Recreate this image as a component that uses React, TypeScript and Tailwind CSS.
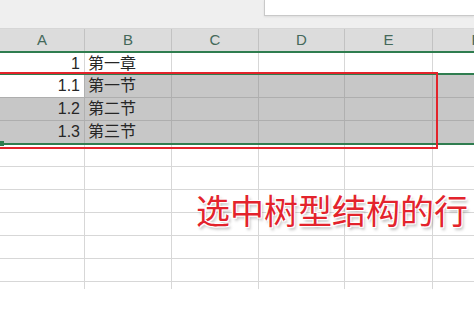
const cols = [
  { key: "A", w: "w-[85px]" },
  { key: "B", w: "w-[87px]" },
  { key: "C", w: "w-[87px]" },
  { key: "D", w: "w-[86px]" },
  { key: "E", w: "w-[88px]" },
  { key: "F", w: "w-[87px]" },
]

const rows = [
  { num: "1", title: "第一章", selected: false },
  { num: "1.1", title: "第一节", selected: true, active: true },
  { num: "1.2", title: "第二节", selected: true },
  { num: "1.3", title: "第三节", selected: true },
  { num: "", title: "", selected: false },
  { num: "", title: "", selected: false },
  { num: "", title: "", selected: false },
  { num: "", title: "", selected: false },
  { num: "", title: "", selected: false },
  { num: "", title: "", selected: false },
]

const cellFont = { fontFamily: '"Liberation Sans", "Noto Sans CJK SC", sans-serif' }

export default function App() {
  return (
    <div className="relative w-[474px] h-[315px] overflow-hidden bg-white" style={cellFont}>
      {/* formula bar strip */}
      <div className="flex h-[29px] bg-[#efefef] border-b border-[#d6d6d6]">
        <div className="w-[264px] shrink-0" />
        <div className="flex-1 h-[16px] bg-white border-l border-b border-[#c9c9c9] shadow-[0_1px_2px_rgba(0,0,0,0.08)]" />
      </div>

      {/* column headers */}
      <div className="flex h-[24px] bg-[#dcdcdc] border-b-2 border-[#2f7d4f]">
        {cols.map((c) => (
          <div
            key={c.key}
            className={`${c.w} shrink-0 border-r border-[#c2c2c2] flex items-center justify-center text-[15px] text-[#44695a]`}
          >
            {c.key}
          </div>
        ))}
      </div>

      {/* rows */}
      {rows.map((r, i) => (
        <div
          key={i}
          className={`flex ${i === 0 ? "h-[22px]" : "h-[23px]"} border-b ${
            r.selected ? "bg-[#c7c7c7] border-[#aeaeae]" : "bg-white border-[#d7d7d7]"
          }`}
        >
          {cols.map((c, j) => (
            <div
              key={c.key}
              className={`${c.w} shrink-0 border-r flex items-center text-[16px] text-[#262626] ${
                r.selected ? "border-[#b0b0b0]" : "border-[#d7d7d7]"
              } ${j === 0 ? "justify-end pr-[4px]" : "pl-[3px]"} ${
                j === 0 && r.active ? "bg-white" : ""
              }`}
            >
              {j === 0 ? r.num : j === 1 ? r.title : ""}
            </div>
          ))}
        </div>
      ))}

      {/* grid tail */}
      <div className="flex h-[7px]">
        {cols.map((c) => (
          <div key={c.key} className={`${c.w} shrink-0 border-r border-[#d7d7d7]`} />
        ))}
      </div>

      {/* selection border */}
      <div className="absolute left-[-4px] right-[-4px] top-[73px] h-[72px] border-2 border-[#2f7d4f]" />
      <div className="absolute left-0 top-[141px] w-[4px] h-[5px] bg-[#2f7d4f]" />

      {/* red annotation box */}
      <div className="absolute left-[-4px] w-[442px] top-[72px] h-[77px] border-2 border-[#e3242b]" />

      {/* annotation text */}
      <div
        className="absolute left-[196px] top-[193px] text-[34px] leading-none text-[#e3232c] whitespace-nowrap"
        style={{
          fontFamily: '"Noto Sans CJK SC", sans-serif',
          textShadow:
            "1px 1px 0 #fff, -1px -1px 0 #fff, 1px -1px 0 #fff, -1px 1px 0 #fff, 2px 3px 3px rgba(0,0,0,0.25)",
        }}
      >
        选中树型结构的行
      </div>
    </div>
  )
}
